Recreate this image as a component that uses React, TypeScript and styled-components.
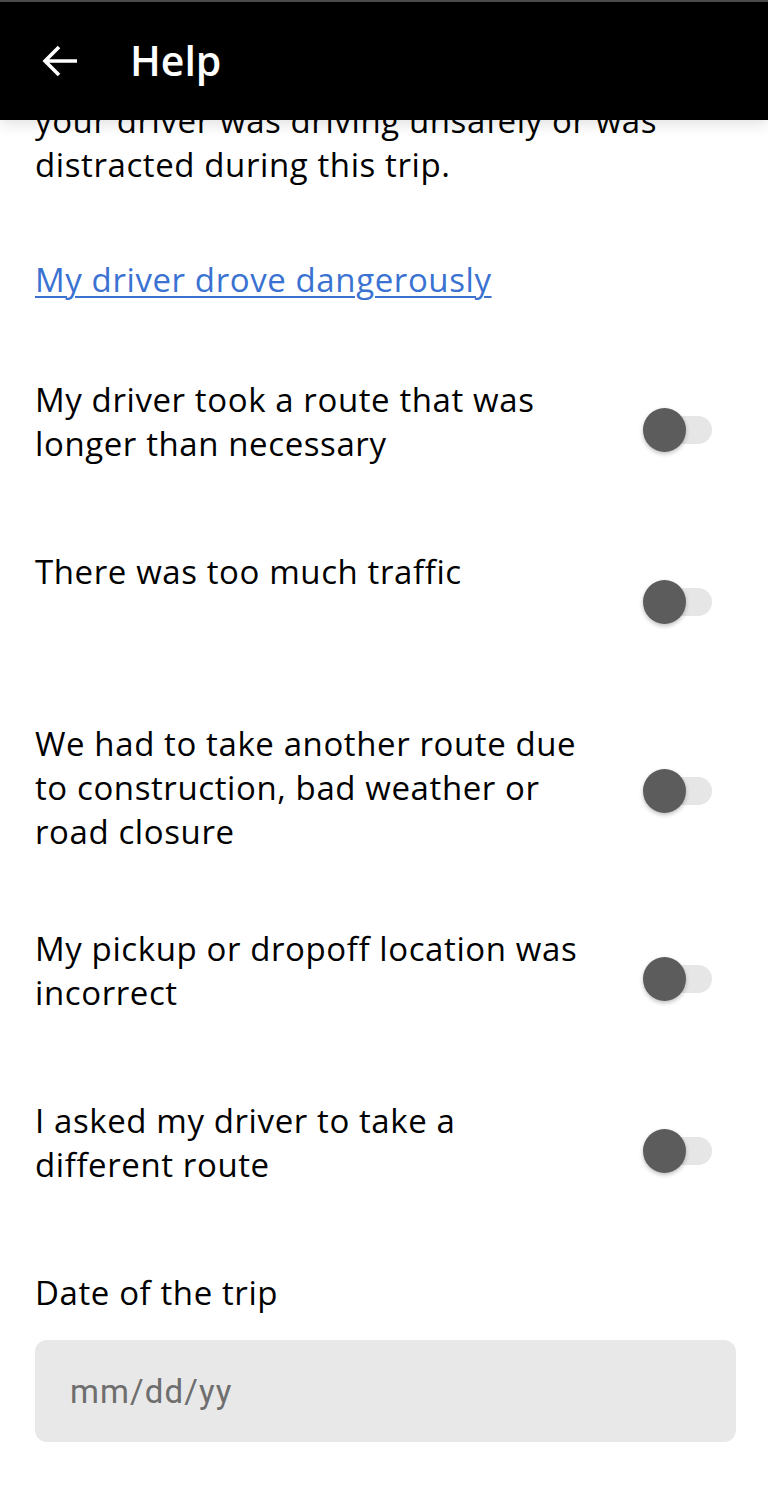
import { styled, createGlobalStyle } from 'styled-components';
import { useState } from 'react';

const GlobalStyle = createGlobalStyle`
    body {
        margin: 0;
        background: #ffffff;
        font-family: 'Open Sans', 'Noto Sans', sans-serif;
        color: #000000;
    }
`;

const Screen = styled.div`
    position: relative;
    min-height: 1505px;
    background: #ffffff;
    overflow: hidden;
`;

const TopBar = styled.header`
    position: absolute;
    top: 0;
    left: 0;
    right: 0;
    height: 118px;
    background: #000000;
    border-top: 2px solid #4a4a4a;
    display: flex;
    align-items: center;
    padding-left: 42px;
    box-shadow: 0 4px 14px rgba(0, 0, 0, 0.12);
    z-index: 2;
`;

const BackButton = styled.button`
    background: none;
    border: none;
    padding: 0;
    width: 36px;
    height: 32px;
    display: flex;
    align-items: center;
    cursor: pointer;
`;

const Title = styled.h1`
    margin: 0 0 0 52px;
    color: #ffffff;
    font-size: 41px;
    font-weight: 600;
    line-height: 1;
    padding-bottom: 2px;
`;

const Content = styled.main`
    padding: 99px 32px 60px 35px;
`;

const Intro = styled.p`
    margin: 0;
    font-size: 33px;
    line-height: 44px;
    letter-spacing: 0.6px;
`;

const HelpLink = styled.a`
    display: inline-block;
    margin-top: 71px;
    margin-bottom: 76px;
    font-size: 33px;
    line-height: 44px;
    letter-spacing: 0.6px;
    color: #3a72d2;
    text-decoration: underline;
    text-decoration-thickness: 2px;
    text-underline-offset: 4px;
`;

const OptionRow = styled.div`
    display: flex;
    align-items: center;
    justify-content: space-between;
    min-height: 104px;
    margin-bottom: 68px;
`;

const OptionText = styled.div`
    align-self: flex-start;
    font-size: 33px;
    line-height: 44px;
    letter-spacing: 0.6px;
    padding-bottom: 5px;
`;

const Toggle = styled.button<{ $on: boolean }>`
    position: relative;
    flex: none;
    width: 69px;
    height: 46px;
    margin-right: 24px;
    padding: 0;
    border: none;
    background: none;
    cursor: pointer;
`;

const Track = styled.span<{ $on: boolean }>`
    position: absolute;
    left: 17px;
    top: 9px;
    width: 52px;
    height: 28px;
    border-radius: 14px;
    background: ${(p) => (p.$on ? '#b9c9ee' : '#e6e6e6')};
`;

const Knob = styled.span<{ $on: boolean }>`
    position: absolute;
    top: 1px;
    left: ${(p) => (p.$on ? '25px' : '0')};
    width: 43px;
    height: 44px;
    border-radius: 50%;
    background: ${(p) => (p.$on ? '#276ef1' : '#5c5c5c')};
    box-shadow: 0 2px 4px rgba(0, 0, 0, 0.25);
`;

const FieldLabel = styled.div`
    font-size: 33px;
    line-height: 44px;
    letter-spacing: 0.6px;
    margin-bottom: 25px;
`;

const DateInput = styled.input`
    box-sizing: border-box;
    width: 100%;
    height: 102px;
    border: none;
    border-radius: 12px;
    background: #e8e8e8;
    padding: 0 35px;
    font-family: 'Roboto', sans-serif;
    font-size: 33px;
    letter-spacing: 1.1px;
    color: #000000;
    outline: none;

    &::placeholder {
        color: #6e6e6e;
    }
`;

const options = [
    ['My driver took a route that was', 'longer than necessary'],
    ['There was too much traffic'],
    ['We had to take another route due', 'to construction, bad weather or', 'road closure'],
    ['My pickup or dropoff location was', 'incorrect'],
    ['I asked my driver to take a', 'different route'],
];

export default function App() {
    const [checked, setChecked] = useState<boolean[]>(options.map(() => false));
    const [date, setDate] = useState("");

    function flip(i: number) {
        setChecked(checked.map((c, j) => (j === i ? !c : c)));
    }

    return (
        <Screen>
            <GlobalStyle />
            <TopBar>
                <BackButton aria-label="Back">
                    <svg width="36" height="32" viewBox="0 0 36 32" fill="none">
                        <path d="M35 16H3M17 2L3 16l14 14" stroke="#ffffff" strokeWidth="3.6" strokeLinejoin="miter" />
                    </svg>
                </BackButton>
                <Title>Help</Title>
            </TopBar>

            <Content>
                <Intro>
                    your driver was driving unsafely or was
                    <br />
                    distracted during this trip.
                </Intro>

                <HelpLink href="#">My driver drove dangerously</HelpLink>

                {options.map((lines, i) => (
                    <OptionRow key={i}>
                        <OptionText>
                            {lines.map((l, k) => (
                                <div key={k}>{l}</div>
                            ))}
                        </OptionText>
                        <Toggle $on={checked[i]} onClick={() => flip(i)} aria-pressed={checked[i]}>
                            <Track $on={checked[i]} />
                            <Knob $on={checked[i]} />
                        </Toggle>
                    </OptionRow>
                ))}

                <FieldLabel>Date of the trip</FieldLabel>
                <DateInput
                    type="text"
                    placeholder="mm/dd/yy"
                    value={date}
                    onChange={(e) => setDate(e.target.value)}
                />
            </Content>
        </Screen>
    );
}
